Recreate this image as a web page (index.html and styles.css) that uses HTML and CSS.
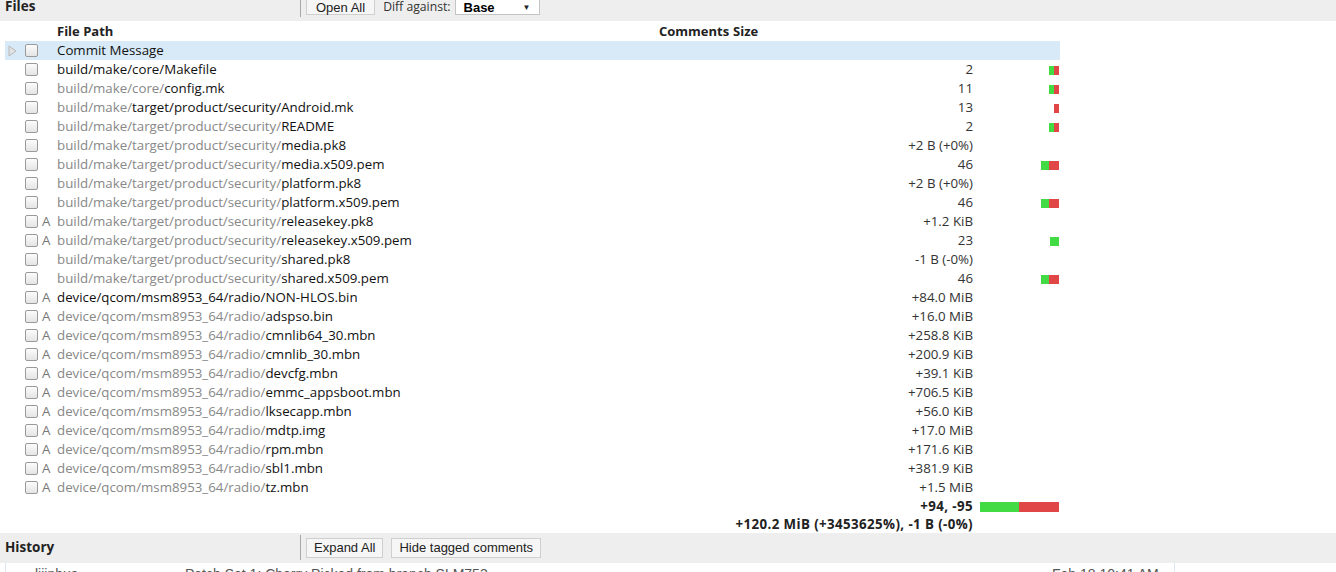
FILE: index.html
```html
<!DOCTYPE html>
<html>
<head>
<meta charset="utf-8">
<title>Files</title>
<link rel="stylesheet" href="styles.css">
</head>
<body>
<div class="page">
  <div class="section-bar files-bar">
    <div class="bar-title">Files</div>
    <div class="bar-tools">
      <button class="btn">Open All</button>
      <span class="diff-label">Diff against:</span>
      <div class="select"><span class="select-val">Base</span><span class="select-arrow">&#9660;</span></div>
    </div>
  </div>

  <table class="file-table">
    <colgroup>
      <col class="c-ptr"><col class="c-chk"><col class="c-st"><col class="c-path"><col class="c-com"><col class="c-size"><col class="c-bar">
    </colgroup>
    <thead>
      <tr><th></th><th></th><th></th><th class="h-path">File Path</th><th class="h-com">Comments</th><th class="h-size">Size</th><th></th></tr>
    </thead>
    <tbody>
      <tr class="active">
        <td class="ptr"><svg width="9" height="12" viewBox="0 0 9 12"><polygon points="1,1 8,6 1,11" fill="#e2e2e2" stroke="#b8b8b8" stroke-width="1"/></svg></td>
        <td class="chk"><span class="box"></span></td><td class="st"></td>
        <td class="path"><span class="name">Commit Message</span></td><td></td><td class="size"></td><td class="bar"></td>
      </tr>
      <tr><td></td><td class="chk"><span class="box"></span></td><td class="st"></td><td class="path"><span class="name">build/make/core/Makefile</span></td><td></td><td class="size">2</td><td class="bar"><span class="graph"><i class="ins" style="width:5px"></i><i class="del" style="width:5px"></i></span></td></tr>
      <tr><td></td><td class="chk"><span class="box"></span></td><td class="st"></td><td class="path"><span class="dir">build/make/core/</span><span class="name">config.mk</span></td><td></td><td class="size">11</td><td class="bar"><span class="graph"><i class="ins" style="width:5px"></i><i class="del" style="width:5px"></i></span></td></tr>
      <tr><td></td><td class="chk"><span class="box"></span></td><td class="st"></td><td class="path"><span class="dir">build/make/</span><span class="name">target/product/security/Android.mk</span></td><td></td><td class="size">13</td><td class="bar"><span class="graph"><i class="del" style="width:5px"></i></span></td></tr>
      <tr><td></td><td class="chk"><span class="box"></span></td><td class="st"></td><td class="path"><span class="dir">build/make/target/product/security/</span><span class="name">README</span></td><td></td><td class="size">2</td><td class="bar"><span class="graph"><i class="ins" style="width:5px"></i><i class="del" style="width:5px"></i></span></td></tr>
      <tr><td></td><td class="chk"><span class="box"></span></td><td class="st"></td><td class="path"><span class="dir">build/make/target/product/security/</span><span class="name">media.pk8</span></td><td></td><td class="size">+2 B (+0%)</td><td class="bar"></td></tr>
      <tr><td></td><td class="chk"><span class="box"></span></td><td class="st"></td><td class="path"><span class="dir">build/make/target/product/security/</span><span class="name">media.x509.pem</span></td><td></td><td class="size">46</td><td class="bar"><span class="graph"><i class="ins" style="width:8px"></i><i class="del" style="width:10px"></i></span></td></tr>
      <tr><td></td><td class="chk"><span class="box"></span></td><td class="st"></td><td class="path"><span class="dir">build/make/target/product/security/</span><span class="name">platform.pk8</span></td><td></td><td class="size">+2 B (+0%)</td><td class="bar"></td></tr>
      <tr><td></td><td class="chk"><span class="box"></span></td><td class="st"></td><td class="path"><span class="dir">build/make/target/product/security/</span><span class="name">platform.x509.pem</span></td><td></td><td class="size">46</td><td class="bar"><span class="graph"><i class="ins" style="width:8px"></i><i class="del" style="width:10px"></i></span></td></tr>
      <tr><td></td><td class="chk"><span class="box"></span></td><td class="st">A</td><td class="path"><span class="dir">build/make/target/product/security/</span><span class="name">releasekey.pk8</span></td><td></td><td class="size">+1.2 KiB</td><td class="bar"></td></tr>
      <tr><td></td><td class="chk"><span class="box"></span></td><td class="st">A</td><td class="path"><span class="dir">build/make/target/product/security/</span><span class="name">releasekey.x509.pem</span></td><td></td><td class="size">23</td><td class="bar"><span class="graph"><i class="ins" style="width:9px"></i></span></td></tr>
      <tr><td></td><td class="chk"><span class="box"></span></td><td class="st"></td><td class="path"><span class="dir">build/make/target/product/security/</span><span class="name">shared.pk8</span></td><td></td><td class="size">-1 B (-0%)</td><td class="bar"></td></tr>
      <tr><td></td><td class="chk"><span class="box"></span></td><td class="st"></td><td class="path"><span class="dir">build/make/target/product/security/</span><span class="name">shared.x509.pem</span></td><td></td><td class="size">46</td><td class="bar"><span class="graph"><i class="ins" style="width:8px"></i><i class="del" style="width:10px"></i></span></td></tr>
      <tr><td></td><td class="chk"><span class="box"></span></td><td class="st">A</td><td class="path"><span class="name">device/qcom/msm8953_64/radio/NON-HLOS.bin</span></td><td></td><td class="size">+84.0 MiB</td><td class="bar"></td></tr>
      <tr><td></td><td class="chk"><span class="box"></span></td><td class="st">A</td><td class="path"><span class="dir">device/qcom/msm8953_64/radio/</span><span class="name">adspso.bin</span></td><td></td><td class="size">+16.0 MiB</td><td class="bar"></td></tr>
      <tr><td></td><td class="chk"><span class="box"></span></td><td class="st">A</td><td class="path"><span class="dir">device/qcom/msm8953_64/radio/</span><span class="name">cmnlib64_30.mbn</span></td><td></td><td class="size">+258.8 KiB</td><td class="bar"></td></tr>
      <tr><td></td><td class="chk"><span class="box"></span></td><td class="st">A</td><td class="path"><span class="dir">device/qcom/msm8953_64/radio/</span><span class="name">cmnlib_30.mbn</span></td><td></td><td class="size">+200.9 KiB</td><td class="bar"></td></tr>
      <tr><td></td><td class="chk"><span class="box"></span></td><td class="st">A</td><td class="path"><span class="dir">device/qcom/msm8953_64/radio/</span><span class="name">devcfg.mbn</span></td><td></td><td class="size">+39.1 KiB</td><td class="bar"></td></tr>
      <tr><td></td><td class="chk"><span class="box"></span></td><td class="st">A</td><td class="path"><span class="dir">device/qcom/msm8953_64/radio/</span><span class="name">emmc_appsboot.mbn</span></td><td></td><td class="size">+706.5 KiB</td><td class="bar"></td></tr>
      <tr><td></td><td class="chk"><span class="box"></span></td><td class="st">A</td><td class="path"><span class="dir">device/qcom/msm8953_64/radio/</span><span class="name">lksecapp.mbn</span></td><td></td><td class="size">+56.0 KiB</td><td class="bar"></td></tr>
      <tr><td></td><td class="chk"><span class="box"></span></td><td class="st">A</td><td class="path"><span class="dir">device/qcom/msm8953_64/radio/</span><span class="name">mdtp.img</span></td><td></td><td class="size">+17.0 MiB</td><td class="bar"></td></tr>
      <tr><td></td><td class="chk"><span class="box"></span></td><td class="st">A</td><td class="path"><span class="dir">device/qcom/msm8953_64/radio/</span><span class="name">rpm.mbn</span></td><td></td><td class="size">+171.6 KiB</td><td class="bar"></td></tr>
      <tr><td></td><td class="chk"><span class="box"></span></td><td class="st">A</td><td class="path"><span class="dir">device/qcom/msm8953_64/radio/</span><span class="name">sbl1.mbn</span></td><td></td><td class="size">+381.9 KiB</td><td class="bar"></td></tr>
      <tr><td></td><td class="chk"><span class="box"></span></td><td class="st">A</td><td class="path"><span class="dir">device/qcom/msm8953_64/radio/</span><span class="name">tz.mbn</span></td><td></td><td class="size">+1.5 MiB</td><td class="bar"></td></tr>
      <tr class="total"><td></td><td></td><td></td><td></td><td></td><td class="size">+94, -95</td><td class="bar total-bar"><span class="graph"><i class="ins" style="width:39px"></i><i class="del" style="width:40px"></i></span></td></tr>
      <tr class="total total2"><td></td><td></td><td></td><td></td><td class="size" colspan="2">+120.2 MiB (+3453625%), -1 B (-0%)</td><td></td></tr>
    </tbody>
  </table>

  <div class="section-bar history">
    <div class="bar-title">History</div>
    <div class="bar-tools">
      <button class="btn">Expand All</button>
      <button class="btn">Hide tagged comments</button>
    </div>
  </div>

  <div class="hist-row">
    <span class="h-author">lijinhua</span>
    <span class="h-msg">Patch Set 1: Cherry Picked from branch SLM753.</span>
    <span class="h-date">Feb 18 10:41 AM</span>
  </div>
</div>
</body>
</html>
```

FILE: styles.css
```css
html, body {
  margin: 0;
  padding: 0;
  background: #fff;
  overflow: hidden;
}

.page {
  font-family: "Open Sans", "Liberation Sans", sans-serif;
  font-size: 13px;
  color: #222;
}

/* ---------- section bars ---------- */
.section-bar {
  display: flex;
  align-items: flex-start;
  height: 30px;
  background: #eeeeee;
}

.bar-title {
  width: 295px;
  padding-left: 5px;
  line-height: 29px;
  font-weight: bold;
  font-size: 13.5px;
  color: #222;
}

.bar-tools {
  display: flex;
  align-items: center;
  height: 25px;
  margin-top: 2px;
  border-left: 1px solid #a8a8a8;
  padding-left: 5px;
  gap: 8px;
}

.btn {
  font-family: "Liberation Sans", Arial, sans-serif;
  font-size: 13px;
  height: 20px;
  padding: 0 7px;
  margin: 0;
  background: #f6f6f6;
  border: 1px solid #cfcfcf;
  border-radius: 0;
  color: #222;
  line-height: 18px;
}

/* Files bar: page is scrolled so only its lower part shows */
.files-bar {
  height: 21px;
}

.files-bar .bar-title {
  line-height: 13px;
}

.files-bar .bar-tools {
  height: 17px;
  margin-top: 0;
  padding-left: 5px;
  align-items: flex-start;
}

.files-bar .btn {
  height: 15px;
  line-height: 13px;
  border-top: 0;
  padding: 0 9px;
}

.diff-label {
  color: #333;
  font-size: 12.2px;
  line-height: 13px;
}

.select {
  display: flex;
  align-items: center;
  justify-content: space-between;
  width: 67px;
  height: 14px;
  padding: 0 8px 0 8px;
  margin-left: -4px;
  background: #fff;
  border: 1px solid #c4c4c4;
  border-top: 0;
  font-family: "Liberation Sans", Arial, sans-serif;
  font-size: 13px;
  line-height: 13px;
}

.select-val {
  font-weight: bold;
  color: #000;
}

.select-arrow {
  font-size: 8px;
  color: #222;
}

/* ---------- file table ---------- */
.file-table {
  margin-left: 5px;
  width: 1055px;
  table-layout: fixed;
  border-collapse: collapse;
  border-spacing: 0;
  font-size: 13.3px;
}

.c-ptr { width: 16px; }
.c-chk { width: 19px; }
.c-st { width: 15px; }
.c-path { width: 602px; }
.c-com { width: 74px; }
.c-size { width: 244px; }
.c-bar { width: 85px; }

.file-table th,
.file-table td {
  padding: 0;
  height: 19px;
  line-height: 19px;
  white-space: nowrap;
  overflow: hidden;
  vertical-align: middle;
}

.file-table th {
  height: 20px;
  text-align: left;
  font-weight: bold;
  font-size: 13px;
  color: #222;
}

.h-path,
.h-com,
.h-size {
  padding-left: 2px !important;
}

.active td {
  background: #d8eaf8;
}

.ptr {
  padding-left: 3px !important;
}

.ptr svg {
  display: block;
}

.chk {
  padding-left: 4px !important;
}

.box {
  display: block;
  width: 11px;
  height: 11px;
  border: 1px solid #9a9a9a;
  border-radius: 2px;
  background: linear-gradient(#fcfcfc, #e4e4e4);
}

.st {
  padding-left: 2px !important;
  color: #777;
}

.path {
  padding-left: 2px !important;
}

.dir {
  color: #888;
}

.name {
  color: #111;
}

.size {
  text-align: right;
  padding-right: 2px !important;
  color: #333;
}

.bar {
  text-align: right;
  padding-right: 1px !important;
}

.graph {
  display: inline-flex;
  vertical-align: middle;
  height: 9px;
}

.graph i {
  display: block;
  height: 9px;
}

.ins { background: #43db43; }
.del { background: #e04646; }

.total td {
  font-weight: bold;
  color: #222;
  letter-spacing: 0.4px;
}

.total-bar .graph,
.total-bar .graph i {
  height: 10px;
}

.file-table .total2 td {
  height: 17px;
  line-height: 17px;
  overflow: visible;
  vertical-align: top;
}

/* ---------- history ---------- */
.hist-row {
  display: flex;
  margin-left: 5px;
  width: 1168px;
  height: 24px;
  border-left: 1px solid #dce6f4;
  border-right: 1px solid #dce6f4;
  font-family: "Liberation Sans", Arial, sans-serif;
  font-size: 14px;
  color: #555;
  padding-top: 3px;
}

.h-author {
  width: 150px;
  padding-left: 29px;
}

.h-msg {
  width: 867px;
}
```
